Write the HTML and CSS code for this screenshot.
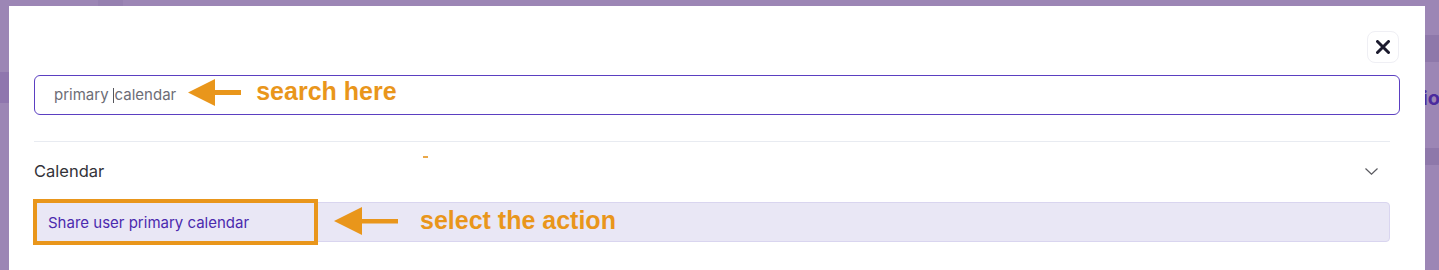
FILE: index.html
```html
<!DOCTYPE html>
<html lang="en">
<head>
<meta charset="utf-8">
<title>Search actions</title>
<link rel="stylesheet" href="styles.css">
</head>
<body>
<div class="page">
  <div class="gutter gutter-left"></div>
  <div class="modal">
    <div class="modal-top">
      <button class="close-btn" aria-label="Close">
        <svg width="14" height="14" viewBox="0 0 14 14"><path d="M1.5 1.5 L12.5 12.5 M12.5 1.5 L1.5 12.5" stroke="#1c1b2e" stroke-width="3" stroke-linecap="round"/></svg>
      </button>
    </div>
    <div class="search">
      <span class="typed">primary</span><span class="caret"></span><span class="typed">calendar</span>
      <span class="note note-search">
        <svg class="arrow" width="53" height="27" viewBox="0 0 53 27"><path d="M0 13.5 L27 0 L27 11 L53 11 L53 16 L27 16 L27 27 Z" fill="#e9961b"/></svg>
        <span class="note-text">search here</span>
      </span>
    </div>
    <div class="group">
      <div class="group-head">
        <span class="group-title">Calendar</span>
        <span class="dash"></span>
        <svg class="chevron" width="13" height="7" viewBox="0 0 13 7"><path d="M0.5 0.5 L6.5 6.2 L12.5 0.5" fill="none" stroke="#5a5a60" stroke-width="1.2"/></svg>
      </div>
      <div class="action-row">
        <span class="action-item">Share user primary calendar</span>
        <span class="note note-action">
          <svg class="arrow" width="64" height="28" viewBox="0 0 64 28"><path d="M0 14 L28 0 L28 12 L64 12 L64 16.5 L28 16.5 L28 28 Z" fill="#e9961b"/></svg>
          <span class="note-text">select the action</span>
        </span>
      </div>
    </div>
  </div>
  <div class="gutter gutter-right"><span class="peek">Actio</span></div>
</div>
</body>
</html>
```
FILE: styles.css
```css
* { box-sizing: border-box; }
html, body { margin: 0; padding: 0; }
body {
  background: #9c86b5;
  font-family: Inter, "Noto Sans", sans-serif;
  overflow: hidden;
}
.page {
  display: flex;
  height: 270px;
  background: linear-gradient(to right, #9c86b5 0, #9c86b5 98px, #9680b0 98px, #9680b0 123px, #9c86b5 123px) top / 100% 6px no-repeat, #9c86b5;
}
.gutter { flex: none; }
.gutter-left {
  width: 9px;
  margin-top: 6px;
  background: linear-gradient(to bottom, #9c86b5 0, #9c86b5 66px, #8f76ae 66px, #8f76ae 97px, #9c86b5 97px);
}
.gutter-right {
  width: 14px;
  margin-top: 6px;
  display: flex;
  justify-content: flex-end;
  align-items: flex-start;
  overflow: hidden;
  padding-top: 81px;
  background: linear-gradient(to bottom, #9c86b5 0, #9c86b5 29px, #8e78aa 29px, #8e78aa 56px, #9c86b5 56px, #9c86b5 142px, #8e78aa 142px, #8e78aa 159px, #9c86b5 159px);
}
.peek {
  font-family: Inter, sans-serif;
  font-weight: 700;
  font-size: 20px;
  line-height: 22px;
  color: #4b2a9e;
  white-space: nowrap;
  margin-right: -1px;
}
.modal {
  flex: none;
  width: 1416px;
  margin-top: 6px;
  background: #ffffff;
  padding: 25px 25px 0 25px;
}
.modal-top {
  display: flex;
  justify-content: flex-end;
  padding-right: 1px;
}
.close-btn {
  width: 32px;
  height: 32px;
  border: 1px solid #efeff4;
  border-radius: 8px;
  background: #fff;
  display: flex;
  align-items: center;
  justify-content: center;
  padding: 0;
}
.search {
  margin-top: 12px;
  height: 40px;
  border: 1px solid #5b3fc1;
  border-radius: 6px;
  display: flex;
  align-items: center;
  padding-left: 19px;
  font-size: 15px;
  color: #6d6d76;
}
.typed { line-height: 20px; }
.caret {
  display: inline-block;
  width: 1px;
  height: 15px;
  background: #55555c;
  margin: 1px 1px 0 4px;
}
.note {
  display: flex;
  align-items: center;
  font-family: "Liberation Sans", Arial, sans-serif;
  font-weight: 700;
  font-size: 25px;
  color: #e9961b;
}
.note-search { margin-left: 12px; margin-top: -5px; }
.note-search .note-text { margin-left: 15px; margin-top: -3px; }
.group {
  margin-top: 26px;
  margin-right: 10px;
  border-top: 1px solid #e8ebf1;
}
.group-head {
  position: relative;
  height: 58px;
  display: flex;
  align-items: center;
  justify-content: space-between;
  padding-right: 12px;
}
.group-title {
  font-size: 16.5px;
  color: #333338;
}
.dash {
  position: absolute;
  left: 389px;
  top: 14px;
  width: 5px;
  height: 2px;
  background: #eaa84a;
}
.chevron { margin-top: 0; }
.action-row {
  height: 40px;
  background: #e9e7f5;
  border: 1px solid #d9d5ef;
  border-radius: 4px;
  display: flex;
  align-items: center;
  margin-top: 2px;
}
.action-item {
  flex: none;
  width: 285px;
  height: 46px;
  margin: -4px 0 -4px -2px;
  border: 4px solid #e9961b;
  padding-left: 11px;
  display: flex;
  align-items: center;
  font-size: 15px;
  color: #4b2aae;
}
.note-action { margin-left: 16px; margin-top: -3px; }
.note-action .note-text { margin-left: 22px; margin-top: -1px; }
```
